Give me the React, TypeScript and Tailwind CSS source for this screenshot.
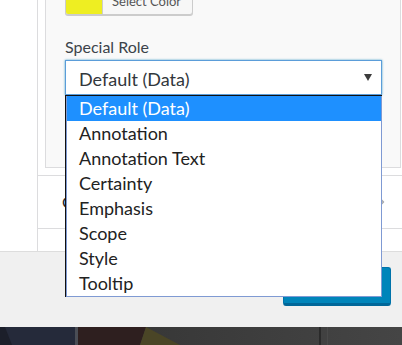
import { ChevronRight } from 'lucide-react';

const roles = [
  'Default (Data)',
  'Annotation',
  'Annotation Text',
  'Certainty',
  'Emphasis',
  'Scope',
  'Style',
  'Tooltip',
];

const App = () => {
  return (
    <div className="w-[402px] h-[345px] overflow-hidden bg-white text-[#23282d] font-['Lato','Open_Sans',sans-serif] flex flex-col">
      {/* Panel area */}
      <div className="h-[251px] shrink-0 flex relative z-10">
        <div className="w-[37px] shrink-0" />
        <div className="flex-1 flex flex-col border-l border-[#dcdcde] bg-white">
          {/* Series settings box */}
          <div className="ml-[7px] w-[356px] h-[168px] shrink-0 border-x border-b border-[#dcdcde] bg-[#f9f9f9] px-[19px] flex flex-col">
            <button className="-mt-[13px] h-[28px] w-[128px] flex items-stretch rounded-[3px] border border-[#cccccc] bg-[#f7f7f7] shadow-[0_1px_0_#cccccc] overflow-hidden">
              <span className="w-[37px] bg-[#eeee22] border-r border-[#cccccc]" />
              <span className="px-[9px] text-[13px] leading-[26px] text-[#555555]">Select Color</span>
            </button>

            <label className="mt-[22px] text-[16px] leading-[20px] text-[#3c434a]">Special Role</label>

            {/* Open select */}
            <div className="relative mt-[3px] w-[317px]">
              <div className="h-[35px] flex items-center justify-between pl-[13px] pr-[9px] bg-white border border-[#5b9dd9] shadow-[0_0_2px_rgba(30,140,190,0.8)]">
                <span className="text-[18px] leading-[22px] pt-[2px] text-[#32373c]">Default (Data)</span>
                <svg width="8" height="7" viewBox="0 0 8 7">
                  <polygon points="0,0 8,0 4,7" fill="#3c3c3c" />
                </svg>
              </div>

              <ul className="absolute left-0 top-full z-20 w-[317px] bg-white border-l border-t border-[#111111]">
                <div className="border-r border-b border-l border-[#7f9ad3]">
                  {roles.map((role, i) => (
                    <li
                      key={role}
                      className={
                        i === 0
                          ? 'h-[25px] pl-[12px] text-[18px] leading-[25px] bg-[#1e90ff] text-white'
                          : 'h-[25px] pl-[12px] text-[18px] leading-[25px] text-[#222222]'
                      }
                    >
                      {role}
                    </li>
                  ))}
                </div>
              </ul>
            </div>
          </div>

          {/* Collapsed sections */}
          <div className="mt-[7px] h-[54px] shrink-0 border-y border-[#dcdcde] flex items-center justify-between pl-[24px] pr-[14px]">
            <span className="text-[16px] text-[#23282d]">Custom Tooltip</span>
            <ChevronRight size={12} strokeWidth={3} className="text-[#a7aaad]" />
          </div>
          <div className="h-[22px] overflow-hidden pl-[24px] pt-[20px]">
            <span className="text-[16px] leading-[20px] text-[#23282d]">Titles</span>
          </div>
        </div>
      </div>

      {/* Modal footer */}
      <div className="h-[76px] shrink-0 bg-[#f0f0f0] border-t border-[#dddddd] flex justify-end items-start pt-[15px] pr-[11px]">
        <button className="w-[108px] h-[39px] rounded-[3px] bg-[#0085ba] border border-[#0073aa] border-b-[3px] border-b-[#006799] text-white text-[14px]">
          Save
        </button>
      </div>

      {/* Background image strip */}
      <div className="h-[18px] shrink-0 bg-[#3a3a3a]">
        <svg width="402" height="18" viewBox="0 0 402 18">
          <defs>
            <linearGradient id="g" x1="0" x2="1" y1="0" y2="0">
              <stop offset="0" stopColor="#303030" />
              <stop offset="1" stopColor="#454545" />
            </linearGradient>
          </defs>
          <rect x="0" y="0" width="402" height="18" fill="url(#g)" />
          <polygon points="0,0 75,0 75,18 0,18" fill="#252a3a" />
          <polygon points="0,0 5,0 12,18 0,18" fill="#1c1f2a" />
          <rect x="75" y="0" width="3" height="18" fill="#4a4d55" />
          <polygon points="78,0 146,0 140,18 78,18" fill="#2e1f1f" />
          <polygon points="146,0 180,18 140,18" fill="#4a4526" />
          <rect x="319" y="0" width="2" height="18" fill="#2a2a2a" />
          <rect x="327" y="0" width="1" height="18" fill="#4a4a4a" />
        </svg>
      </div>
    </div>
  );
};

export default App;
